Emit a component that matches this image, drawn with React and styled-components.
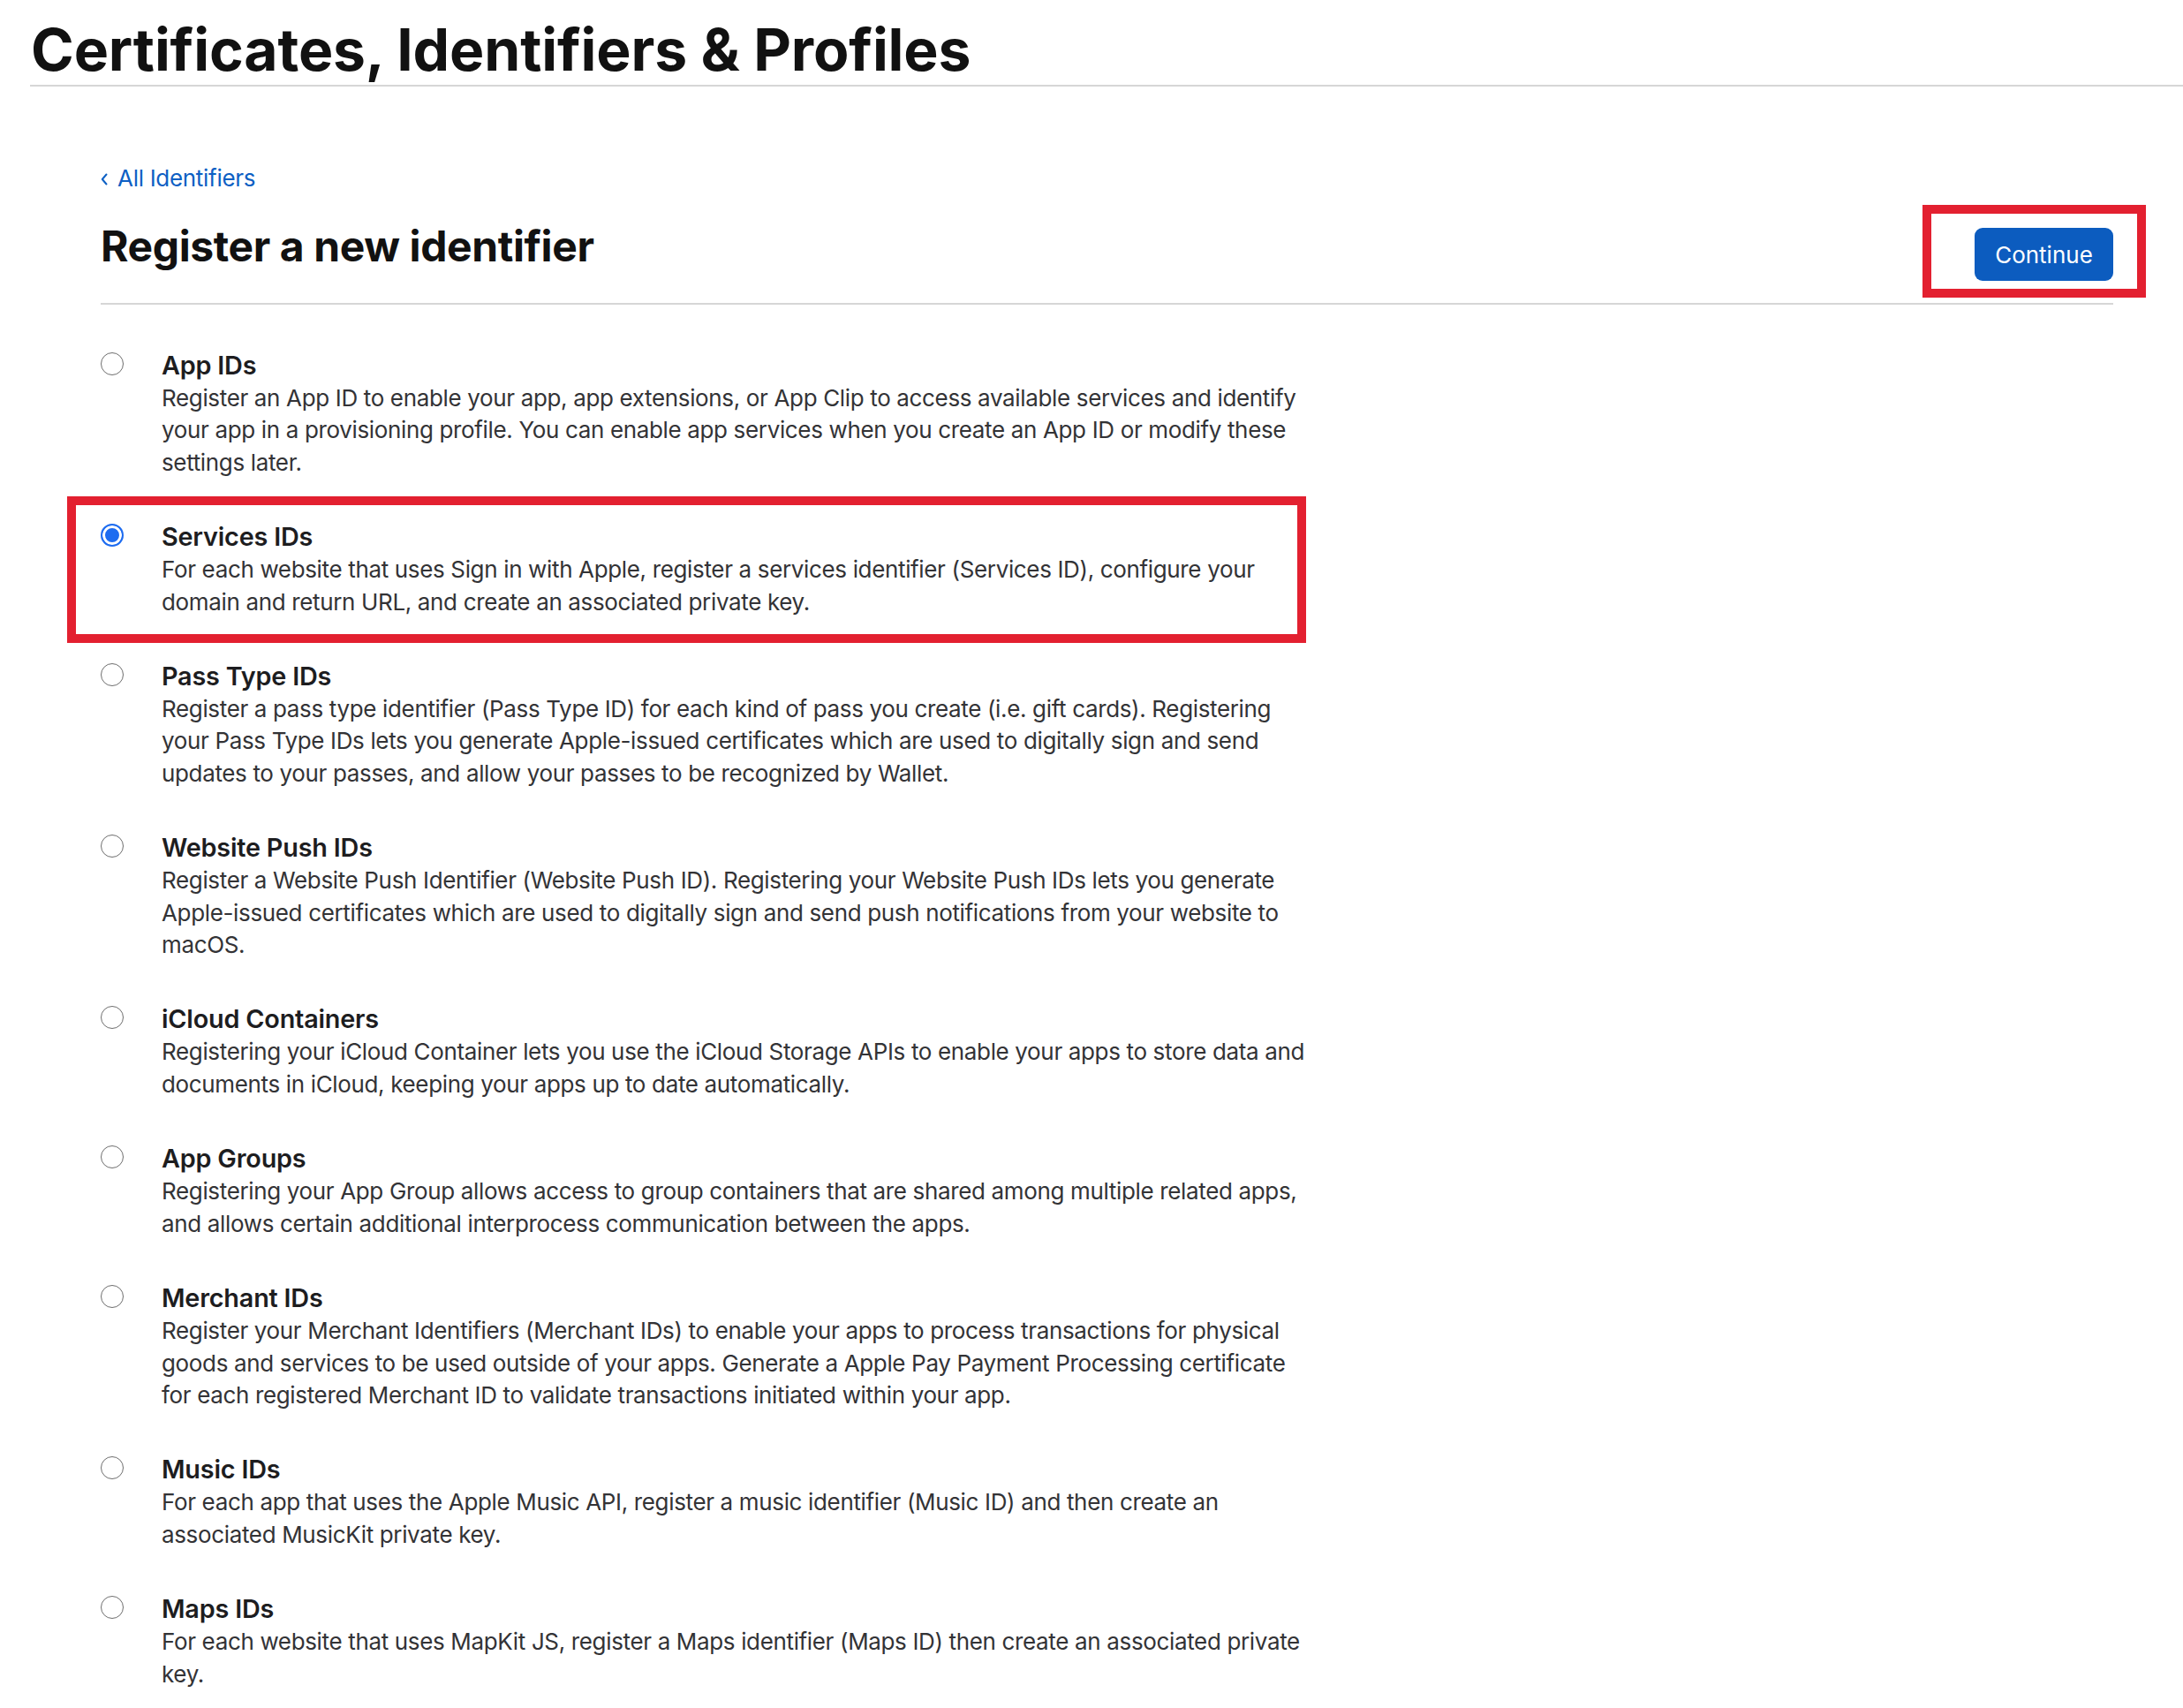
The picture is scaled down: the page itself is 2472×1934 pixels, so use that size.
import React, { useState } from 'react'
import styled, { createGlobalStyle } from 'styled-components'

const GlobalStyle = createGlobalStyle`
body {
    margin: 0;
    background: #fff;
    font-family: Inter, "Noto Sans", "Liberation Sans", sans-serif;
    color: #1d1d1f;
}
`

const PageHeader = styled.header`
margin-left: 34px;
padding-top: 16px;
border-bottom: 2px solid #d6d6d6;
`

const PageTitle = styled.h1`
margin: 0 0 0 1px;
font-size: 66px;
line-height: 80px;
font-weight: 700;
letter-spacing: -0.15px;
color: #111;
`

const Main = styled.main`
margin: 0 79px 0 114px;
padding-top: 86px;
`

const BackLink = styled.a`
display: inline-flex;
align-items: center;
gap: 11px;
font-size: 26px;
line-height: 36px;
letter-spacing: -0.3px;
color: #0d60c4;
text-decoration: none;
cursor: pointer;
svg {
    margin-top: 2px;
}
`

const TitleRow = styled.div`
display: flex;
justify-content: space-between;
align-items: flex-start;
margin-top: 30px;
padding-bottom: 25px;
border-bottom: 2px solid #d6d6d6;
`

const Heading = styled.h2`
margin: 0;
font-size: 48px;
line-height: 58px;
font-weight: 700;
letter-spacing: -0.4px;
color: #111;
`

const Marked = styled.div`
position: relative;
margin-top: ${p => p.$offset || 0}px;
&::after {
    content: '';
    position: absolute;
    pointer-events: none;
    border: 10px solid #e32030;
    top: ${p => p.$top}px;
    right: ${p => p.$right}px;
    bottom: ${p => p.$bottom}px;
    left: ${p => p.$left}px;
}
`

const Button = styled.button`
display: block;
width: 157px;
height: 60px;
border: none;
border-radius: 9px;
background: #0c5cbf;
color: #fff;
font-family: inherit;
font-size: 26px;
cursor: pointer;
`

const OptionList = styled.div`
display: flex;
flex-direction: column;
gap: 47px;
width: 1370px;
padding-top: 50px;
`

const OptionRow = styled.label`
display: flex;
align-items: flex-start;
gap: 43px;
cursor: pointer;
`

const Radio = styled.span`
flex: none;
box-sizing: border-box;
width: 26px;
height: 26px;
margin-top: 4px;
border-radius: 50%;
border: ${p => p.$checked ? '2px solid #1e6cf0' : '1.5px solid #6e6e6e'};
background: ${p => p.$checked ? '#1e6cf0' : '#fff'};
box-shadow: ${p => p.$checked ? 'inset 0 0 0 3px #fff' : 'none'};
`

const OptionText = styled.div`
flex: 1;
`

const OptionName = styled.div`
font-size: 28.8px;
line-height: 38px;
font-weight: 600;
letter-spacing: -0.2px;
color: #1d1d1f;
`

const OptionDesc = styled.p`
margin: 0;
font-size: 26px;
line-height: 36.4px;
letter-spacing: -0.35px;
color: #333336;
`

const options = [
    { name: 'App IDs', desc: 'Register an App ID to enable your app, app extensions, or App Clip to access available services and identify your app in a provisioning profile. You can enable app services when you create an App ID or modify these settings later.' },
    { name: 'Services IDs', desc: 'For each website that uses Sign in with Apple, register a services identifier (Services ID), configure your domain and return URL, and create an associated private key.' },
    { name: 'Pass Type IDs', desc: 'Register a pass type identifier (Pass Type ID) for each kind of pass you create (i.e. gift cards). Registering your Pass Type IDs lets you generate Apple-issued certificates which are used to digitally sign and send updates to your passes, and allow your passes to be recognized by Wallet.' },
    { name: 'Website Push IDs', desc: 'Register a Website Push Identifier (Website Push ID). Registering your Website Push IDs lets you generate Apple-issued certificates which are used to digitally sign and send push notifications from your website to macOS.' },
    { name: 'iCloud Containers', desc: 'Registering your iCloud Container lets you use the iCloud Storage APIs to enable your apps to store data and documents in iCloud, keeping your apps up to date automatically.' },
    { name: 'App Groups', desc: 'Registering your App Group allows access to group containers that are shared among multiple related apps, and allows certain additional interprocess communication between the apps.' },
    { name: 'Merchant IDs', desc: 'Register your Merchant Identifiers (Merchant IDs) to enable your apps to process transactions for physical goods and services to be used outside of your apps. Generate a Apple Pay Payment Processing certificate for each registered Merchant ID to validate transactions initiated within your app.' },
    { name: 'Music IDs', desc: 'For each app that uses the Apple Music API, register a music identifier (Music ID) and then create an associated MusicKit private key.' },
    { name: 'Maps IDs', desc: 'For each website that uses MapKit JS, register a Maps identifier (Maps ID) then create an associated private key.' },
]

function Chevron() {
    return (
        <svg width="8" height="14" viewBox="0 0 8 14" fill="none">
            <path d="M6.5 1.5L1.8 7l4.7 5.5" stroke="#0d60c4" strokeWidth="2" strokeLinecap="round" strokeLinejoin="round" />
        </svg>
    )
}

function Option({ item, checked, marked, onSelect }) {
    const row = (
        <OptionRow onClick={onSelect}>
            <Radio $checked={checked} />
            <OptionText>
                <OptionName>{item.name}</OptionName>
                <OptionDesc>{item.desc}</OptionDesc>
            </OptionText>
        </OptionRow>
    )
    if (!marked) return row
    // red annotation box drawn round the highlighted option
    return <Marked $top={-27} $right={5} $bottom={-28} $left={-38}>{row}</Marked>
}

export default function App() {
    const [selected, setSelected] = useState('Services IDs')

    return (
        <>
            <GlobalStyle />
            <PageHeader>
                <PageTitle>Certificates, Identifiers &amp; Profiles</PageTitle>
            </PageHeader>
            <Main>
                <BackLink><Chevron />All Identifiers</BackLink>
                <TitleRow>
                    <Heading>Register a new identifier</Heading>
                    <Marked $offset={8} $top={-26} $right={-37} $bottom={-19} $left={-59}>
                        <Button>Continue</Button>
                    </Marked>
                </TitleRow>
                <OptionList>
                    {options.map(item => (
                        <Option
                            key={item.name}
                            item={item}
                            marked={item.name === 'Services IDs'}
                            checked={selected === item.name}
                            onSelect={() => setSelected(item.name)}
                        />
                    ))}
                </OptionList>
            </Main>
        </>
    )
}
